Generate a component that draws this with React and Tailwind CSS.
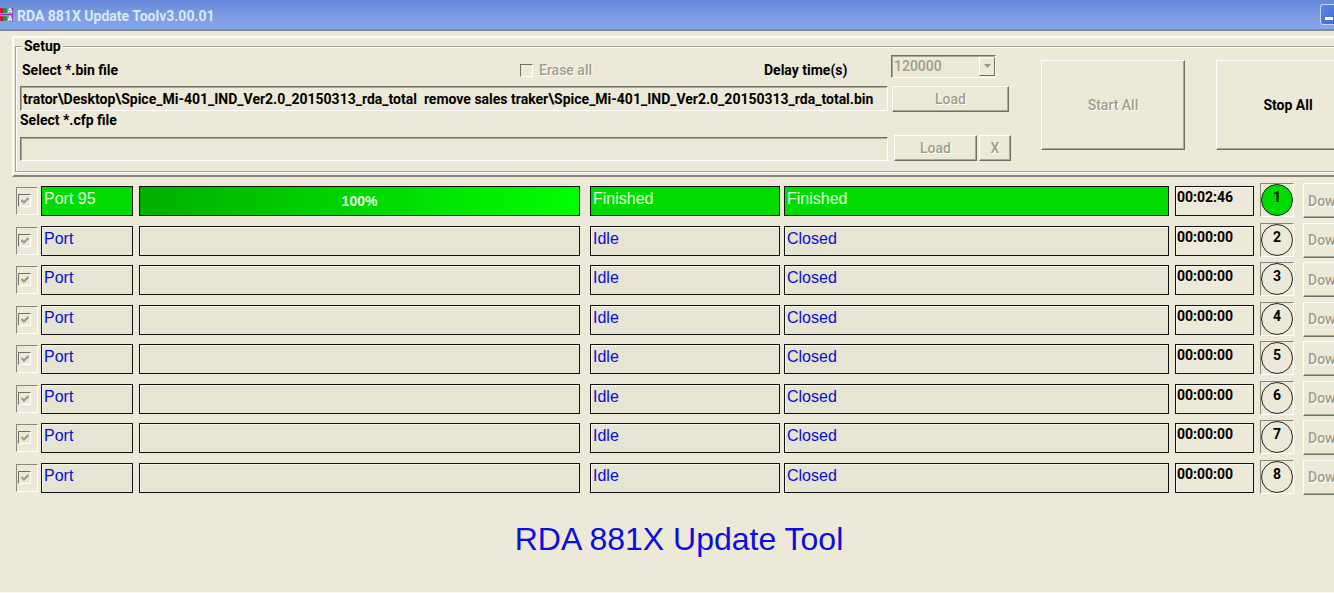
import React, { useState } from "react";

const ports = [
  { id: 1, name: "Port 95", progress: 100, state: "Finished", status: "Finished", time: "00:02:46" },
  { id: 2, name: "Port", progress: 0, state: "Idle", status: "Closed", time: "00:00:00" },
  { id: 3, name: "Port", progress: 0, state: "Idle", status: "Closed", time: "00:00:00" },
  { id: 4, name: "Port", progress: 0, state: "Idle", status: "Closed", time: "00:00:00" },
  { id: 5, name: "Port", progress: 0, state: "Idle", status: "Closed", time: "00:00:00" },
  { id: 6, name: "Port", progress: 0, state: "Idle", status: "Closed", time: "00:00:00" },
  { id: 7, name: "Port", progress: 0, state: "Idle", status: "Closed", time: "00:00:00" },
  { id: 8, name: "Port", progress: 0, state: "Idle", status: "Closed", time: "00:00:00" },
];

const AppIcon = () => (
  <svg className="h-4 w-[14px] shrink-0" viewBox="0 0 14 16" aria-hidden="true">
    <rect x="0" y="1" width="3" height="5" fill="#d81e3c" />
    <rect x="3" y="1" width="4" height="5" fill="#2f9a5c" />
    <rect x="7" y="1" width="5" height="5" fill="#5aa88c" />
    <rect x="0" y="9" width="3" height="5" fill="#d81e3c" />
    <rect x="3" y="9" width="4" height="5" fill="#2f9a5c" />
    <rect x="7" y="9" width="5" height="5" fill="#5aa88c" />
    <path d="M0 7.5h13M12.5 1v14" stroke="#a02fd0" strokeWidth="1" />
    <path d="M8 6l1.5-4.5h1L12 6M8.6 4.5h2.8M8 14l1.5-4.5h1L12 14M8.6 12.5h2.8" stroke="#fff" fill="none" />
    <path d="M1 2l2 4M4 2l2 3M1 10l2 4M4 10l2 3" stroke="#0d4030" strokeWidth="0.7" />
  </svg>
);

const Button = ({ className = "", children, ...props }) => (
  <button
    className={`border border-t-white border-l-white border-r-[#716f64] border-b-[#716f64] shadow-[inset_-1px_-1px_0_#aca899] font-bold text-black disabled:font-medium disabled:text-[#a09d8e] disabled:[text-shadow:1px_1px_0_#fff] ${className}`}
    {...props}
  >
    {children}
  </button>
);

const PortRow = ({ port }) => {
  const done = port.progress === 100;
  const field = `h-[30px] border border-[#111] px-[2px] text-base leading-6 ${
    done ? "bg-[#00dc00] text-[#e4ffe0]" : "bg-[#e6e5d3] text-[#0c0cd4] shadow-[inset_1px_1px_0_#f6f5ea]"
  }`;

  return (
    <tr className="align-top">
      <td className="pt-1">
        <div className="relative h-7 w-[22px] border border-t-[#8a887a] border-l-[#8a887a] border-r-white border-b-white">
          <input
            type="checkbox"
            checked
            disabled
            readOnly
            aria-label={`Enable port ${port.id}`}
            className="mt-[6px] ml-px block h-[13px] w-[13px] appearance-none border border-t-[#716f64] border-l-[#716f64] border-r-white border-b-white"
          />
          <svg className="absolute top-[9px] left-1 h-[7px] w-2" viewBox="0 0 8 7" aria-hidden="true">
            <path d="M0.5 3l2.5 2.5L7.5 1" stroke="#9a9788" strokeWidth="2" fill="none" />
          </svg>
        </div>
      </td>
      <td className="pt-[3px]">
        <div className={`mr-[6px] ${field}`}>{port.name}</div>
      </td>
      <td className="pt-[3px]">
        <div
          role="progressbar"
          aria-label={`Port ${port.id} progress`}
          aria-valuenow={port.progress}
          className="mr-[10px] h-[30px] border border-[#111] bg-[#e6e5d3] shadow-[inset_1px_1px_0_#f6f5ea]"
        >
          {done && (
            <div
              className="h-full bg-linear-to-r from-[#00b000] to-[#00ff00] text-center text-sm leading-7 font-bold text-[#e4ffe0]"
              style={{ width: `${port.progress}%` }}
            >
              {port.progress}%
            </div>
          )}
        </div>
      </td>
      <td className="pt-[3px]">
        <div className={`mr-1 ${field}`}>{port.state}</div>
      </td>
      <td className="pt-[3px]">
        <div className={`mr-[6px] ${field}`}>{port.status}</div>
      </td>
      <td className="pt-[3px]">
        <div className="mr-[6px] h-[30px] border border-[#111] px-px font-[Roboto] text-sm leading-5 font-bold shadow-[inset_1px_1px_0_#f6f5ea]">
          {port.time}
        </div>
      </td>
      <td>
        <div className="h-[34px] w-[34px] border border-t-[#8a887a] border-l-[#8a887a] border-r-white border-b-white">
          <div
            className={`h-8 w-8 rounded-full border border-[#222] text-center font-[Roboto] text-sm leading-6 font-bold ${
              done ? "bg-[#00dc00]" : ""
            }`}
          >
            {port.id}
          </div>
        </div>
      </td>
      <td>
        <Button disabled className="h-[35px] w-20 px-1 text-left font-[Roboto] text-sm">
          Dow
        </Button>
      </td>
    </tr>
  );
};

const App = () => {
  const [binFile, setBinFile] = useState(
    "trator\\Desktop\\Spice_Mi-401_IND_Ver2.0_20150313_rda_total  remove sales traker\\Spice_Mi-401_IND_Ver2.0_20150313_rda_total.bin"
  );
  const [cfpFile, setCfpFile] = useState("");

  const sunken =
    "min-w-0 flex-1 border border-t-[#716f64] border-l-[#716f64] border-r-white border-b-white bg-transparent shadow-[inset_1px_1px_0_#aca899] outline-none";

  return (
    <div className="min-h-screen overflow-hidden border-b border-[#f8f7f0] bg-[#ece9d8] font-[Roboto,sans-serif] text-sm text-black">
      {/* Title bar */}
      <header className="flex h-[31px] items-center border-b-2 border-[#85868a] bg-linear-to-b from-[#6688da] via-[#7b9ae2] to-[#83a8ee]">
        <AppIcon />
        <h1 className="ml-[3px] flex-1 pt-[2px] font-bold text-[#dce8fc]">RDA 881X Update Toolv3.00.01</h1>
        <button
          aria-label="Minimize"
          className="-mr-2 flex h-[21px] w-[22px] items-end rounded-[3px] border border-[#c4d6fa] bg-linear-to-br from-[#5c86e6] to-[#3d66d4] pb-1 pl-1"
        >
          <span className="h-[3px] w-2 bg-white" />
        </button>
      </header>

      {/* Setup */}
      <section className="mt-[5px] ml-3 border-t-2 border-b-2 border-l-2 border-t-[#fdfcf3] border-b-[#85837a] border-l-[#fdfcf3] pb-[3px] pl-px">
        <fieldset className="flex items-start border border-r-0 border-[#a3a192] pb-[10px] pl-1 shadow-[inset_1px_1px_0_#fff,0_1px_0_#fff]">
          <legend className="ml-[2px] bg-[#ece9d8] px-[2px] leading-4 font-bold">Setup</legend>

          <div className="min-w-0 flex-1">
            <div className="flex h-8 items-center">
              <label htmlFor="bin" className="flex-1 pl-[2px] font-bold">
                Select *.bin file
              </label>
              <label className="flex w-[244px] items-center gap-[6px] font-medium text-[#a09d8e] [text-shadow:1px_1px_0_#fff]">
                <input
                  type="checkbox"
                  disabled
                  className="h-[13px] w-[13px] appearance-none border border-t-[#716f64] border-l-[#716f64] border-r-white border-b-white"
                />
                Erase all
              </label>
              <label htmlFor="delay" className="w-[127px] font-bold">
                Delay time(s)
              </label>
              <div className="relative mb-2 w-[120px]">
                <select
                  id="delay"
                  disabled
                  className="block h-[23px] w-[105px] appearance-none border border-t-[#716f64] border-l-[#716f64] border-r-white border-b-white pl-[2px] font-medium text-[#a09d8e] opacity-100 shadow-[inset_1px_1px_0_#aca899]"
                >
                  <option>120000</option>
                </select>
                <span className="pointer-events-none absolute top-[2px] left-[88px] flex h-[19px] w-4 items-center justify-center border border-t-white border-l-white border-r-[#716f64] border-b-[#716f64]">
                  <svg className="h-1 w-[7px]" viewBox="0 0 7 4" aria-hidden="true">
                    <path d="M0 0h7L3.5 4z" fill="#9a9788" />
                  </svg>
                </span>
              </div>
            </div>
            <div className="flex items-start">
              <input
                id="bin"
                value={binFile}
                onChange={(e) => setBinFile(e.target.value)}
                className={`${sunken} h-[25px] px-[2px] font-bold`}
              />
              <div className="ml-1 w-[119px]">
                <Button disabled className="h-[26px] w-[117px]">
                  Load
                </Button>
              </div>
            </div>
            <label htmlFor="cfp" className="block h-[23px] leading-4 font-bold">
              Select *.cfp file
            </label>
            <div className="flex items-end">
              <input
                id="cfp"
                value={cfpFile}
                onChange={(e) => setCfpFile(e.target.value)}
                className={`${sunken} h-6 px-[2px] font-bold`}
              />
              <div className="ml-[6px] flex w-[117px] gap-[2px]">
                <Button disabled className="h-[26px] w-[83px]">
                  Load
                </Button>
                <Button disabled className="h-[26px] w-8">
                  X
                </Button>
              </div>
            </div>
          </div>

          <Button disabled className="mt-[6px] ml-[30px] h-[90px] w-36 shrink-0">
            Start All
          </Button>
          <Button className="mt-[6px] -mr-[26px] ml-[31px] h-[90px] w-36 shrink-0">Stop All</Button>
        </fieldset>
      </section>

      {/* Ports */}
      <table className="mt-[6px] ml-4 h-[316px] w-[calc(100%-16px)] table-fixed font-['Liberation_Sans',sans-serif]">
        <colgroup>
          <col className="w-[25px]" />
          <col className="w-[98px]" />
          <col />
          <col className="w-[194px]" />
          <col className="w-[391px]" />
          <col className="w-[85px]" />
          <col className="w-[43px]" />
          <col className="w-[31px]" />
        </colgroup>
        <tbody>
          {ports.map((port) => (
            <PortRow key={port.id} port={port} />
          ))}
        </tbody>
      </table>

      <p className="mt-5 pl-6 text-center font-['Liberation_Sans',sans-serif] text-[32px] leading-10 text-[#0c0ce0]">
        RDA 881X Update Tool
      </p>
    </div>
  );
};

export default App;
